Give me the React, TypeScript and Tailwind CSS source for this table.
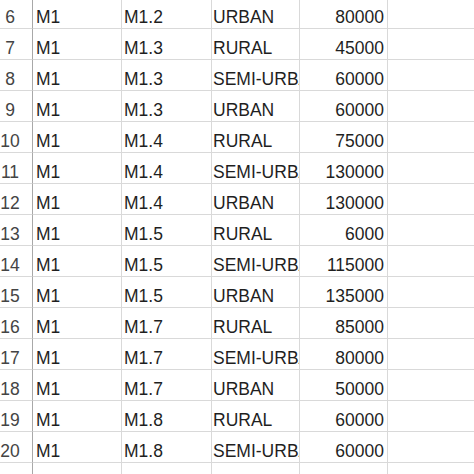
import React from "react";

const rows: [number | string, string, string, string, string][] = [
  [6, "M1", "M1.2", "URBAN", "80000"],
  [7, "M1", "M1.3", "RURAL", "45000"],
  [8, "M1", "M1.3", "SEMI-URBAN", "60000"],
  [9, "M1", "M1.3", "URBAN", "60000"],
  [10, "M1", "M1.4", "RURAL", "75000"],
  [11, "M1", "M1.4", "SEMI-URBAN", "130000"],
  [12, "M1", "M1.4", "URBAN", "130000"],
  [13, "M1", "M1.5", "RURAL", "6000"],
  [14, "M1", "M1.5", "SEMI-URBAN", "115000"],
  [15, "M1", "M1.5", "URBAN", "135000"],
  [16, "M1", "M1.7", "RURAL", "85000"],
  [17, "M1", "M1.7", "SEMI-URBAN", "80000"],
  [18, "M1", "M1.7", "URBAN", "50000"],
  [19, "M1", "M1.8", "RURAL", "60000"],
  [20, "M1", "M1.8", "SEMI-URBAN", "60000"],
  ["", "", "", "", ""],
];

const cell =
  "h-[31px] border-b border-r border-[#d9d9d9] flex items-end pb-[1px] leading-[20px] overflow-hidden whitespace-nowrap";

export default function App() {
  return (
    <div
      className="w-[474px] h-[474px] overflow-hidden bg-white text-[17.5px] text-[#1f1f1f]"
      style={{ fontFamily: '"Liberation Sans", Arial, sans-serif' }}
    >
      <div className="-mt-[2px] flex flex-col">
        {rows.map((r, i) => (
          <div key={i} className="flex">
            <div
              className={`${cell} w-[33px] shrink-0 justify-center pr-[12px] border-r-[#a8a8a8] text-[#444444]`}
            >
              {r[0]}
            </div>
            <div className={`${cell} w-[89px] shrink-0 pl-[3px]`}>{r[1]}</div>
            <div className={`${cell} w-[90px] shrink-0 pl-[2px]`}>{r[2]}</div>
            <div className={`${cell} w-[88px] shrink-0 pl-[1px]`}>{r[3]}</div>
            <div className={`${cell} w-[88px] shrink-0 justify-end pr-[3px]`}>{r[4]}</div>
            <div className={`${cell} w-[100px] shrink-0`}></div>
          </div>
        ))}
      </div>
    </div>
  );
}
